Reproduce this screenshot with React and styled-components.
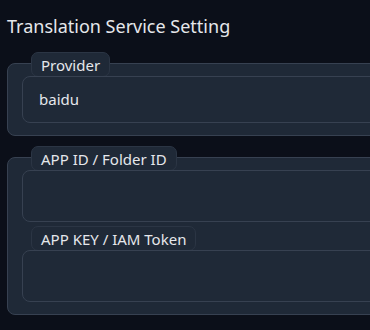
import React from 'react';
import styled, { createGlobalStyle } from 'styled-components';

const GlobalStyle = createGlobalStyle`
    html, body {
        margin: 0;
        padding: 0;
        background: #0b0f19;
        overflow: hidden;
    }
    body {
        font-family: "Noto Sans", "Open Sans", sans-serif;
        color: #e5e7eb;
    }
`;

const Page = styled.div`
    width: 400px;
    padding: 12px 0 0 7px;
`;

const Title = styled.h2`
    margin: 0 0 23px 0;
    font-size: 18px;
    font-weight: 400;
    line-height: 28px;
    color: #e5e7eb;
`;

const Block = styled.div`
    background: #1f2937;
    border: 1px solid #374151;
    border-radius: 8px;
    padding: 0 14px 12px 14px;
    margin-bottom: ${({ gap }) => gap || 0}px;
`;

const Label = styled.div`
    width: fit-content;
    box-sizing: border-box;
    height: 25px;
    margin: ${({ first }) => (first ? '-12px' : '4px')} 0 -1px 9px;
    padding: 0 9px;
    background: #1f2937;
    border: 1px solid #2b3544;
    border-radius: 7px;
    font-size: 15px;
    line-height: 25px;
    color: #e5e7eb;
`;

const Field = styled.div`
    box-sizing: border-box;
    height: ${({ h }) => h}px;
    background: #1f2937;
    border: 1px solid #374151;
    border-radius: 8px;
    padding: 0 16px;
    font-size: 15px;
    line-height: ${({ h }) => h - 2}px;
    color: #e5e7eb;
`;

export default function App() {
    return (
        <Page>
            <GlobalStyle />
            <Title>Translation Service Setting</Title>
            <Block gap={21}>
                <Label first>Provider</Label>
                <Field h={47}>baidu</Field>
            </Block>
            <Block>
                <Label first>APP ID / Folder ID</Label>
                <Field h={52} />
                <Label>APP KEY / IAM Token</Label>
                <Field h={52} />
            </Block>
        </Page>
    );
}
